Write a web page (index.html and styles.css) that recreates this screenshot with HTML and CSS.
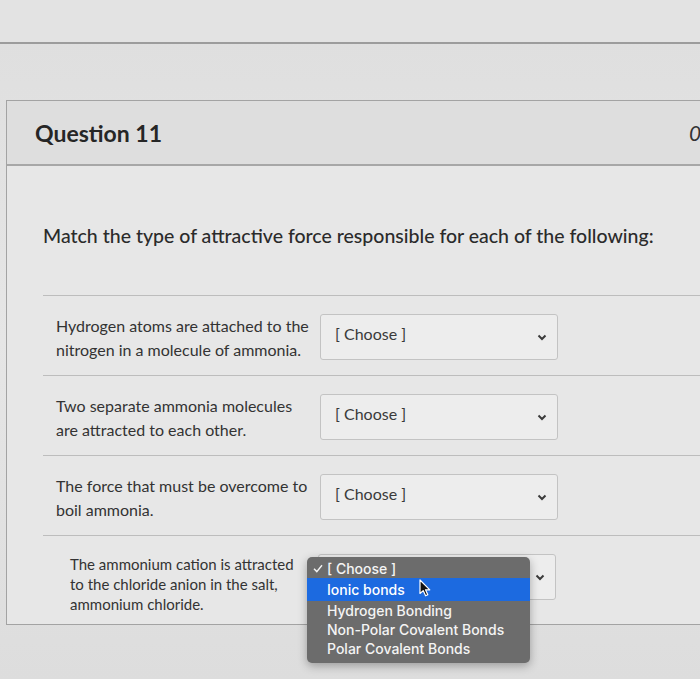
FILE: index.html
```html
<!DOCTYPE html>
<html>

<head>
    <title>Question 11</title>
    <link rel="stylesheet" href="styles.css">
</head>

<body>
<div class="page">

    <div class="top-card"></div>

    <div class="question">
        <div class="q-header">
            <h2 class="q-title">Question 11</h2>
            <span class="q-points">0 pts</span>
        </div>

        <div class="q-body">
            <p class="q-intro">Match the type of attractive force responsible for each of the following:</p>

            <div class="match-row">
                <div class="match-label">Hydrogen atoms are attached to the<br>nitrogen in a molecule of ammonia.</div>
                <div class="select-box">
                    <span>[ Choose ]</span>
                    <svg class="chevron" width="10" height="7" viewBox="0 0 10 7"><path d="M1.5 1.5 L5 5 L8.5 1.5" fill="none" stroke="#3b3b3b" stroke-width="2"/></svg>
                </div>
            </div>

            <div class="match-row">
                <div class="match-label">Two separate ammonia molecules<br>are attracted to each other.</div>
                <div class="select-box">
                    <span>[ Choose ]</span>
                    <svg class="chevron" width="10" height="7" viewBox="0 0 10 7"><path d="M1.5 1.5 L5 5 L8.5 1.5" fill="none" stroke="#3b3b3b" stroke-width="2"/></svg>
                </div>
            </div>

            <div class="match-row">
                <div class="match-label">The force that must be overcome to<br>boil ammonia.</div>
                <div class="select-box">
                    <span>[ Choose ]</span>
                    <svg class="chevron" width="10" height="7" viewBox="0 0 10 7"><path d="M1.5 1.5 L5 5 L8.5 1.5" fill="none" stroke="#3b3b3b" stroke-width="2"/></svg>
                </div>
            </div>

            <div class="match-row last">
                <div class="match-label small">The ammonium cation is attracted<br>to the chloride anion in the salt,<br>ammonium chloride.</div>
                <div class="select-box open">
                    <span class="hidden-value">[ Choose ]</span>
                    <svg class="chevron" width="10" height="7" viewBox="0 0 10 7"><path d="M1.5 1.5 L5 5 L8.5 1.5" fill="none" stroke="#3b3b3b" stroke-width="2"/></svg>

                    <ul class="menu">
                        <li class="menu-item">
                            <svg class="check" width="10" height="9" viewBox="0 0 10 9"><path d="M1 4.8 L3.8 7.6 L9 1.2" fill="none" stroke="#f4f4f4" stroke-width="1.4"/></svg>
                            [ Choose ]
                        </li>
                        <li class="menu-item active">Ionic bonds</li>
                        <li class="menu-item">Hydrogen Bonding</li>
                        <li class="menu-item">Non-Polar Covalent Bonds</li>
                        <li class="menu-item">Polar Covalent Bonds</li>
                    </ul>

                    <svg class="cursor" width="13" height="18" viewBox="0 0 13 18"><path d="M1 1 L1 14.5 L4.2 11.6 L6.6 16.8 L8.8 15.8 L6.5 10.8 L10.8 10.8 Z" fill="#111" stroke="#fff" stroke-width="1.2" stroke-linejoin="round"/></svg>
                </div>
            </div>
        </div>
    </div>

</div>
</body>

</html>
```

FILE: styles.css
```css
body {
    margin: 0;
    font-family: Lato, "Open Sans", sans-serif;
    color: #2f2f2f;
    background-color: #dedede;
}

.page {
    height: 679px;
    overflow: hidden;
    background: linear-gradient(180deg, #dedede 0%, #e6e6e6 50%, #dddddd 100%);
}

.top-card {
    height: 42px;
    background-color: #e3e3e3;
    border-bottom: 2px solid #9c9c9c;
    margin-bottom: 56px;
}

.question {
    margin-left: 6px;
    width: 740px;
    border: 1px solid #a3a3a3;
    border-right: none;
    background-color: #e7e7e7;
}

.q-header {
    height: 63px;
    display: flex;
    align-items: center;
    justify-content: space-between;
    padding: 0 0 0 28px;
    background-color: #dedede;
    border-bottom: 2px solid #a7a7a7;
}

.q-title {
    margin: 0;
    font-size: 23px;
    font-weight: 700;
    color: #262626;
}

.q-points {
    width: 58px;
    font-size: 21px;
    color: #333;
    font-style: italic;
}

.q-body {
    padding: 58px 0 0 36px;
}

.q-intro {
    margin: 0 0 48px 0;
    font-size: 19.5px;
    font-weight: 500;
    color: #2b2b2b;
}

.match-row {
    display: flex;
    align-items: flex-start;
    gap: 4px;
    padding: 18px 0 13px 13px;
    border-top: 1px solid #bdbdbd;
}

.match-row.last {
    padding-bottom: 10px;
}

.match-label {
    width: 260px;
    font-size: 16px;
    line-height: 24px;
    color: #333;
}

.match-label.small {
    font-size: 15px;
    line-height: 20px;
    padding-left: 14px;
    width: 244px;
}

.select-box {
    position: relative;
    width: 238px;
    height: 46px;
    box-sizing: border-box;
    display: flex;
    align-items: center;
    justify-content: space-between;
    padding: 0 10px 0 14px;
    border: 1px solid #c3c3c3;
    border-radius: 3px;
    background-color: #ededed;
    font-size: 16px;
    color: #3a3a3a;
}

.select-box span {
    margin-top: -8px;
}

.select-box .hidden-value {
    visibility: hidden;
}

.menu {
    position: absolute;
    left: -12px;
    top: 2px;
    width: 223px;
    margin: 0;
    padding: 2px 0 5px 0;
    list-style: none;
    background-color: #6c6c6c;
    border-radius: 5px;
    box-shadow: 0 3px 10px rgba(0, 0, 0, 0.3);
    font-family: Inter, Roboto, sans-serif;
    font-size: 14px;
    font-weight: 500;
    color: #f4f4f4;
    z-index: 2;
}

.menu-item {
    height: 19px;
    line-height: 19px;
    padding-left: 20px;
    position: relative;
}

.menu-item.active {
    height: 23px;
    line-height: 23px;
    background-color: #1c6ae0;
    color: #fff;
}

.check {
    position: absolute;
    left: 6px;
    top: 5px;
}

.cursor {
    position: absolute;
    left: 100px;
    top: 24px;
    z-index: 3;
}
```
